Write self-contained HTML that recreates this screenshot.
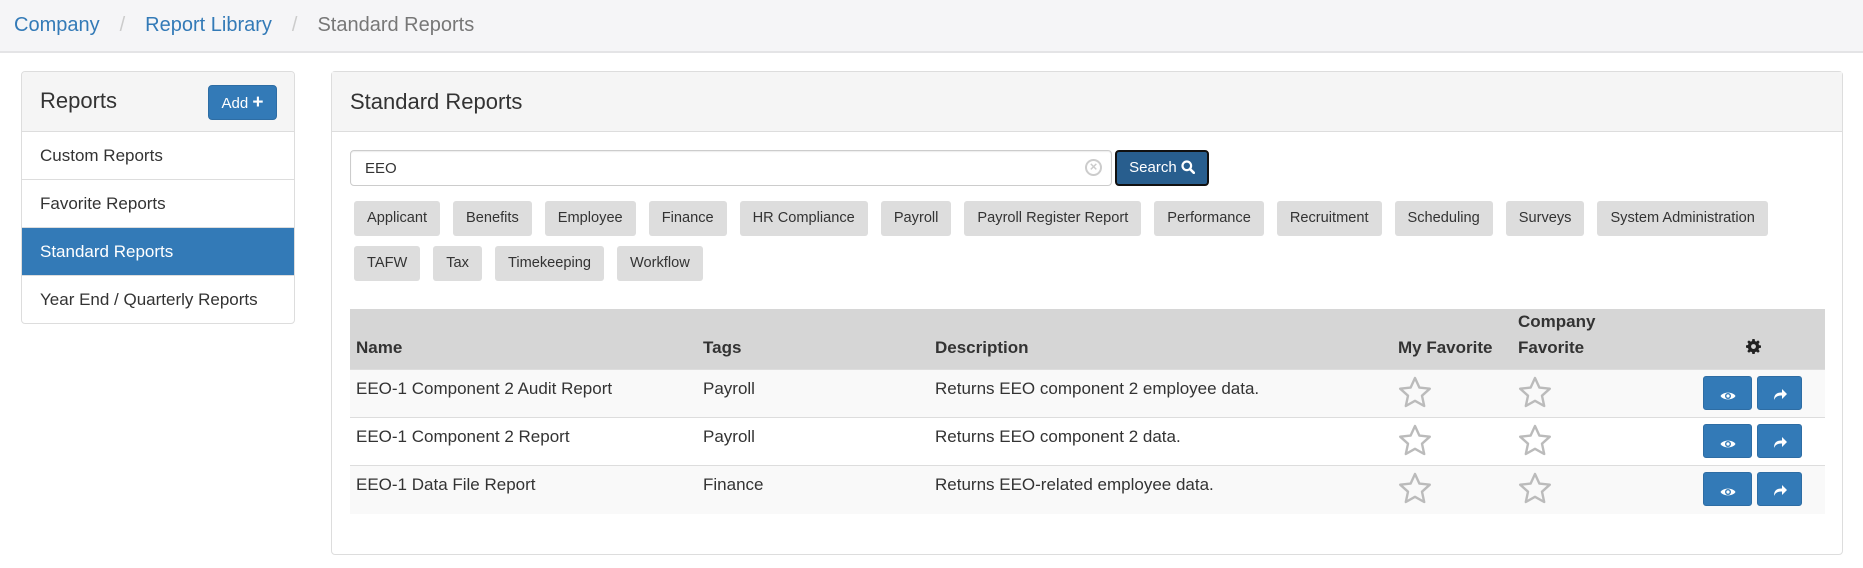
<!DOCTYPE html>
<html><head><style>
*{box-sizing:border-box;margin:0;padding:0}
body{width:1863px;height:568px;background:#fff;font-family:"Liberation Sans",sans-serif;color:#333;position:relative;overflow:hidden}
.bc{position:absolute;left:0;top:0;width:1863px;height:53px;background:#f5f5f7;border-bottom:2px solid #e4e4e6;font-size:20px;line-height:50px;padding-left:14px}
.bc a{color:#337ab7;text-decoration:none}
.bc .s{color:#ccc;margin:0 20px}
.bc .c{color:#777}
.lp{position:absolute;left:21px;top:71px;width:274px;height:253px;border:1px solid #ddd;border-radius:4px;overflow:hidden}
.lp .h{height:60px;background:#f5f5f5;border-bottom:1px solid #ddd;font-size:22px;padding:16px 18px;position:relative}
.add{position:absolute;left:186px;top:13px;width:69px;height:35px;background:#337ab7;border:1px solid #2e6da4;border-radius:4px;color:#fff;font-size:15px;text-align:center;line-height:33px}
.lp .i{height:48px;border-bottom:1px solid #ddd;font-size:17px;padding-left:18px;line-height:47px;color:#333}
.lp .i.a{background:#337ab7;color:#fff}
.rp{position:absolute;left:331px;top:71px;width:1512px;height:484px;border:1px solid #ddd;border-radius:4px}
.rp .h{height:60px;background:#f5f5f5;border-bottom:1px solid #ddd;font-size:22px;padding:17px 18px}
.inp{position:absolute;left:18px;top:78px;width:762px;height:36px;border:1px solid #ccc;border-radius:4px;font-size:15px;padding:9px 14px;box-shadow:inset 0 1px 1px rgba(0,0,0,.075)}
.clr{position:absolute;right:9px;top:8px;width:17px;height:17px;border:2px solid #ccc;border-radius:50%;color:#ccc;font-size:13px;line-height:12px;text-align:center;font-weight:bold}
.sb{position:absolute;left:783px;top:78px;width:94px;height:36px;background:#285e8e;border:2px solid #111;border-radius:4px;color:#fff;font-size:15px;line-height:32px;text-align:center}
.tags{position:absolute;left:22px;top:129px;width:1480px;display:flex;flex-wrap:wrap}
.tag{background:#ddd;border-radius:3px;height:35px;line-height:35px;font-size:14.6px;padding:0 13px;margin:0 13px 10px 0;color:#333}
table{position:absolute;left:18px;top:237px;width:1475px;border-collapse:collapse;font-size:17px}
th{background:#d6d6d6;text-align:left;height:60px;vertical-align:bottom;padding:0 6px 8px;font-weight:bold;line-height:26px}
td{height:48px;padding:0 6px;border-top:1px solid #ddd;vertical-align:top;padding-top:9px}
tr.o td{background:#f9f9f9}
.btn{display:inline-block;height:34px;background:#337ab7;border:1px solid #2e6da4;border-radius:3px;vertical-align:top;margin-top:-3px;text-align:center;padding-top:9px}
</style></head><body>
<div class="bc"><a>Company</a><span class="s">/</span><a>Report Library</a><span class="s">/</span><span class="c">Standard Reports</span></div>
<div class="lp">
<div class="h">Reports<div class="add">Add <b style="font-size:19px">+</b></div></div>
<div class="i">Custom Reports</div>
<div class="i">Favorite Reports</div>
<div class="i a">Standard Reports</div>
<div class="i" style="border:none">Year End / Quarterly Reports</div>
</div>
<div class="rp">
<div class="h">Standard Reports</div>
<div class="inp">EEO<div class="clr">×</div></div>
<div class="sb">Search <svg width="14" height="14" viewBox="0 0 14 14" style="vertical-align:-2px"><circle cx="5.8" cy="5.8" r="4.3" fill="none" stroke="#fff" stroke-width="2.2"/><path d="M9 9l3.8 3.8" stroke="#fff" stroke-width="2.6" stroke-linecap="round"/></svg></div>
<div class="tags">
<span class="tag">Applicant</span><span class="tag">Benefits</span><span class="tag">Employee</span><span class="tag">Finance</span><span class="tag">HR Compliance</span><span class="tag">Payroll</span><span class="tag">Payroll Register Report</span><span class="tag">Performance</span><span class="tag">Recruitment</span><span class="tag">Scheduling</span><span class="tag">Surveys</span><span class="tag">System Administration</span><span class="tag">TAFW</span><span class="tag">Tax</span><span class="tag">Timekeeping</span><span class="tag">Workflow</span>
</div>
<table>
<colgroup><col style="width:347px"><col style="width:232px"><col style="width:463px"><col style="width:120px"><col style="width:170px"><col></colgroup>
<tr><th>Name</th><th>Tags</th><th>Description</th><th>My Favorite</th><th>Company<br>Favorite</th><th style="text-align:center"><svg width="15" height="15" viewBox="0 0 16 16" style="vertical-align:-1px"><path fill="#222" d="M6.8 0h2.4l.4 2.2 1.4.6 1.9-1.3 1.7 1.7-1.3 1.9.6 1.4 2.1.4v2.4l-2.1.4-.6 1.4 1.3 1.9-1.7 1.7-1.9-1.3-1.4.6-.4 2.2H6.8l-.4-2.2-1.4-.6-1.9 1.3-1.7-1.7 1.3-1.9-.6-1.4L0 9.2V6.8l2.1-.4.6-1.4-1.3-1.9 1.7-1.7L5 2.8l1.4-.6z"/><circle cx="8" cy="8" r="2.6" fill="#d6d6d6"/></svg></th></tr>
<tr class="o"><td>EEO-1 Component 2 Audit Report</td><td>Payroll</td><td>Returns EEO component 2 employee data.</td><td><svg width="34" height="33" viewBox="0 0 34 33" style="margin-top:-3px"><path d="M17 2l4.4 9.6 10.4 1.1-7.8 7 2.2 10.3L17 24.8 7.8 30l2.2-10.3-7.8-7 10.4-1.1z" fill="none" stroke="#bbb" stroke-width="2.4" stroke-linejoin="round"/></svg></td><td><svg width="34" height="33" viewBox="0 0 34 33" style="margin-top:-3px"><path d="M17 2l4.4 9.6 10.4 1.1-7.8 7 2.2 10.3L17 24.8 7.8 30l2.2-10.3-7.8-7 10.4-1.1z" fill="none" stroke="#bbb" stroke-width="2.4" stroke-linejoin="round"/></svg></td><td style="text-align:right;padding-right:23px"><span class="btn" style="width:49px;padding-top:10px"><svg width="16" height="12" viewBox="0 0 16 12"><path d="M0.5 6C3 1.5 13 1.5 15.5 6 13 10.5 3 10.5 0.5 6z" fill="#fff"/><circle cx="8" cy="6" r="3" fill="#337ab7"/><circle cx="8" cy="6" r="1.6" fill="#fff"/></svg></span> <span class="btn" style="width:45px"><svg width="14" height="14" viewBox="0 0 14 14"><path d="M1 13C1 7 4 5.5 9 5.5V2l5 5-5 5V8.5C5 8.5 2.5 9.5 1 13z" fill="#fff"/></svg></span></td></tr>
<tr><td>EEO-1 Component 2 Report</td><td>Payroll</td><td>Returns EEO component 2 data.</td><td><svg width="34" height="33" viewBox="0 0 34 33" style="margin-top:-3px"><path d="M17 2l4.4 9.6 10.4 1.1-7.8 7 2.2 10.3L17 24.8 7.8 30l2.2-10.3-7.8-7 10.4-1.1z" fill="none" stroke="#bbb" stroke-width="2.4" stroke-linejoin="round"/></svg></td><td><svg width="34" height="33" viewBox="0 0 34 33" style="margin-top:-3px"><path d="M17 2l4.4 9.6 10.4 1.1-7.8 7 2.2 10.3L17 24.8 7.8 30l2.2-10.3-7.8-7 10.4-1.1z" fill="none" stroke="#bbb" stroke-width="2.4" stroke-linejoin="round"/></svg></td><td style="text-align:right;padding-right:23px"><span class="btn" style="width:49px;padding-top:10px"><svg width="16" height="12" viewBox="0 0 16 12"><path d="M0.5 6C3 1.5 13 1.5 15.5 6 13 10.5 3 10.5 0.5 6z" fill="#fff"/><circle cx="8" cy="6" r="3" fill="#337ab7"/><circle cx="8" cy="6" r="1.6" fill="#fff"/></svg></span> <span class="btn" style="width:45px"><svg width="14" height="14" viewBox="0 0 14 14"><path d="M1 13C1 7 4 5.5 9 5.5V2l5 5-5 5V8.5C5 8.5 2.5 9.5 1 13z" fill="#fff"/></svg></span></td></tr>
<tr class="o"><td>EEO-1 Data File Report</td><td>Finance</td><td>Returns EEO-related employee data.</td><td><svg width="34" height="33" viewBox="0 0 34 33" style="margin-top:-3px"><path d="M17 2l4.4 9.6 10.4 1.1-7.8 7 2.2 10.3L17 24.8 7.8 30l2.2-10.3-7.8-7 10.4-1.1z" fill="none" stroke="#bbb" stroke-width="2.4" stroke-linejoin="round"/></svg></td><td><svg width="34" height="33" viewBox="0 0 34 33" style="margin-top:-3px"><path d="M17 2l4.4 9.6 10.4 1.1-7.8 7 2.2 10.3L17 24.8 7.8 30l2.2-10.3-7.8-7 10.4-1.1z" fill="none" stroke="#bbb" stroke-width="2.4" stroke-linejoin="round"/></svg></td><td style="text-align:right;padding-right:23px"><span class="btn" style="width:49px;padding-top:10px"><svg width="16" height="12" viewBox="0 0 16 12"><path d="M0.5 6C3 1.5 13 1.5 15.5 6 13 10.5 3 10.5 0.5 6z" fill="#fff"/><circle cx="8" cy="6" r="3" fill="#337ab7"/><circle cx="8" cy="6" r="1.6" fill="#fff"/></svg></span> <span class="btn" style="width:45px"><svg width="14" height="14" viewBox="0 0 14 14"><path d="M1 13C1 7 4 5.5 9 5.5V2l5 5-5 5V8.5C5 8.5 2.5 9.5 1 13z" fill="#fff"/></svg></span></td></tr>
</table>
</div>
</body></html>
